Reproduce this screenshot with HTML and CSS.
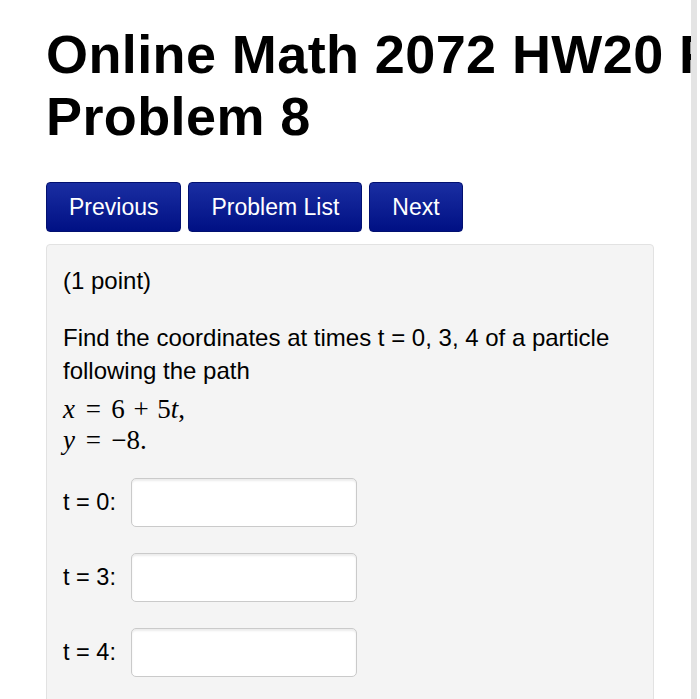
FILE: index.html
```html
<!DOCTYPE html>
<html lang="en">
<head>
<meta charset="utf-8">
<title>Online Math 2072 HW20 Problem 8</title>
<link rel="stylesheet" href="styles.css">
</head>
<body>
<div class="page">
  <div class="main">
    <h1 class="title"><span class="title-line">Online Math 2072 HW20 P</span><br>Problem 8</h1>
    <nav class="nav">
      <a class="btn" href="#">Previous</a>
      <a class="btn" href="#">Problem List</a>
      <a class="btn" href="#">Next</a>
    </nav>
    <div class="panel">
      <p class="points">(1 point)</p>
      <p class="text">Find the coordinates at times t = 0, 3, 4 of a particle following the path</p>
      <div class="math">
        <div class="mline"><span class="mi">x</span><span class="rel">=</span>6<span class="bin">+</span>5<span class="mi">t</span><span class="punct">,</span></div>
        <div class="mline"><span class="mi">y</span><span class="rel">=</span>−8<span class="punct">.</span></div>
      </div>
      <div class="answers">
        <label class="row"><span class="lbl">t = 0:</span><span class="input"></span></label>
        <label class="row"><span class="lbl">t = 3:</span><span class="input"></span></label>
        <label class="row"><span class="lbl">t = 4:</span><span class="input"></span></label>
      </div>
    </div>
  </div>
  <div class="scrollbar"></div>
</div>
</body>
</html>
```
FILE: styles.css
```css
html, body {
  margin: 0;
  padding: 0;
  background: #ffffff;
}
body {
  font-family: "Liberation Sans", Arial, Helvetica, sans-serif;
  color: #000;
}
.page {
  display: flex;
  width: 700px;
  height: 699px;
  overflow: hidden;
}
.main {
  width: 691px;
  flex: none;
  overflow: hidden;
  box-sizing: border-box;
  padding: 23px 37px 0 46px;
}
.scrollbar {
  width: 6px;
  flex: none;
  background: #e4e4e4;
}
.title {
  margin: 0;
  font-size: 54px;
  line-height: 62px;
  font-weight: bold;
  white-space: nowrap;
  letter-spacing: 0.4px;
}
.nav {
  display: flex;
  gap: 7px;
  margin-top: 35px;
}
.btn {
  display: flex;
  align-items: center;
  height: 50px;
  box-sizing: border-box;
  padding: 0 22px;
  border: 1px solid #021070;
  border-radius: 4px;
  background: linear-gradient(#1a2ea2, #001084);
  color: #fff;
  font-size: 23px;
  text-decoration: none;
}
.panel {
  margin-top: 12px;
  background: #f4f4f4;
  border: 1px solid #e2e2e2;
  border-radius: 4px;
  padding: 19px 16px 40px 16px;
  font-size: 24px;
  line-height: 33px;
}
.points {
  margin: 0 0 24px;
}
.text {
  margin: 0;
}
.math {
  font-family: "Liberation Serif", "Times New Roman", serif;
  font-size: 27px;
  line-height: 31px;
  margin-top: 7px;
}
.mline {
  white-space: nowrap;
}
.mi {
  font-style: italic;
}
.rel {
  padding: 0 0.38em 0 0.4em;
}
.bin {
  padding: 0 0.32em;
}
.answers {
  display: flex;
  flex-direction: column;
  gap: 26px;
  margin-top: 22px;
}
.row {
  display: flex;
  align-items: center;
  gap: 13px;
}
.lbl {
  width: 55px;
  white-space: nowrap;
  font-size: 23.5px;
}
.input {
  width: 226px;
  height: 49px;
  box-sizing: border-box;
  background: #fff;
  border: 1px solid #cacaca;
  border-radius: 5px;
  box-shadow: inset 0 2px 2px rgba(0,0,0,0.08);
}
```
